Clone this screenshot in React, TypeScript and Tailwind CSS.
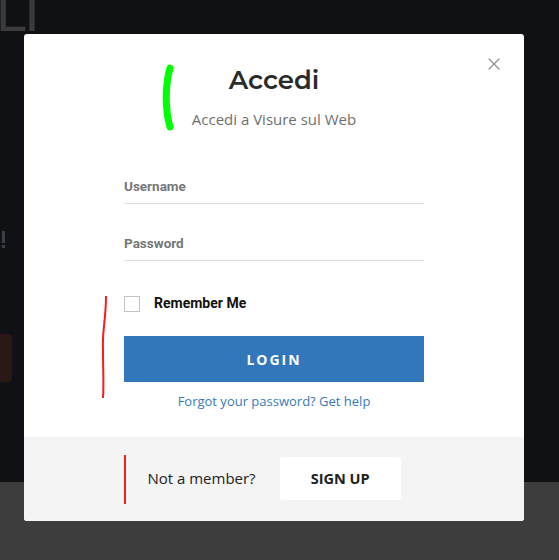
import { X } from "lucide-react";

export default function App() {
    return (
        <div className="relative w-full h-[560px] overflow-hidden bg-[#101114] font-['Open_Sans',sans-serif]">
            {/* page behind the backdrop */}
            <div className="flex flex-col h-full">
                <div className="flex-1 relative">
                    <div className="-ml-[4px] -mt-[16px] h-[40px] text-[56px] leading-[56px] tracking-[-3px] text-[#3b3b3b] font-['Liberation_Sans',sans-serif]">
                        LI
                    </div>
                    <div className="mt-[207px] ml-[2px] w-[3px] h-[12px] bg-[#3a3f44]" />
                    <div className="mt-[2px] ml-[2px] w-[3px] h-[3px] bg-[#3a3f44]" />
                    <div className="mt-[86px] -ml-[6px] w-[18px] h-[48px] rounded-[4px] bg-[#2a1814]" />
                </div>
                <div className="h-[78px] bg-[#3d3d3d]" />
            </div>

            {/* modal */}
            <div className="absolute top-[34px] left-[24px] w-[500px] rounded-[3px] bg-white overflow-hidden">
                <div className="relative px-[100px] pt-[30px] pb-[25px]">
                    <button className="absolute top-[20px] right-[20px] text-[#8a929b]">
                        <X size={20} strokeWidth={1.5} />
                    </button>
                    <h2 className="text-center text-[26px] leading-[32px] font-semibold text-[#2b2b2b] font-['Montserrat','Open_Sans',sans-serif]">
                        Accedi
                    </h2>
                    <p className="mt-[12px] text-center text-[15px] text-[#6f6f6f]">
                        Accedi a Visure sul Web
                    </p>

                    <div className="mt-[45px] font-['Roboto',sans-serif]">
                        <div className="pb-[7px] border-b border-[#dedede] text-[13.5px] font-bold text-[#777]">
                            Username
                        </div>
                        <div className="mt-[29px] pb-[7px] border-b border-[#dedede] text-[13.5px] font-bold text-[#777]">
                            Password
                        </div>
                        <label className="mt-[32px] flex items-center gap-[14px]">
                            <span className="w-[16px] h-[16px] border border-[#c4c4c4] bg-white" />
                            <span className="text-[14px] font-bold text-[#111]">Remember Me</span>
                        </label>
                    </div>

                    <button className="mt-[22px] w-full h-[46px] bg-[#3277bb] text-white text-[14px] font-bold tracking-[2px]">
                        LOGIN
                    </button>
                    <p className="mt-[10px] text-center text-[13px] text-[#3a79b8]">
                        Forgot your password? Get help
                    </p>
                </div>

                <div className="h-[84px] bg-[#f4f4f4] flex items-center justify-center gap-[24px]">
                    <span className="text-[15px] text-[#222]">Not a member?</span>
                    <button className="w-[121px] h-[43px] rounded-[3px] bg-white text-[14.5px] font-bold text-[#222]">
                        SIGN UP
                    </button>
                </div>
            </div>

            {/* marker annotations */}
            <svg className="absolute inset-0 pointer-events-none" width="559" height="560">
                <path d="M170 68 C 165 85, 165 110, 170 127" stroke="#00ff00" strokeWidth="7" strokeLinecap="round" fill="none" />
                <path d="M106 296 C 106 320, 102 330, 103 350 C 103 370, 104 385, 103 398" stroke="#ff1a1a" strokeWidth="2" fill="none" />
                <path d="M125 455 L 125 504" stroke="#ff1a1a" strokeWidth="2" fill="none" />
            </svg>
        </div>
    );
}
